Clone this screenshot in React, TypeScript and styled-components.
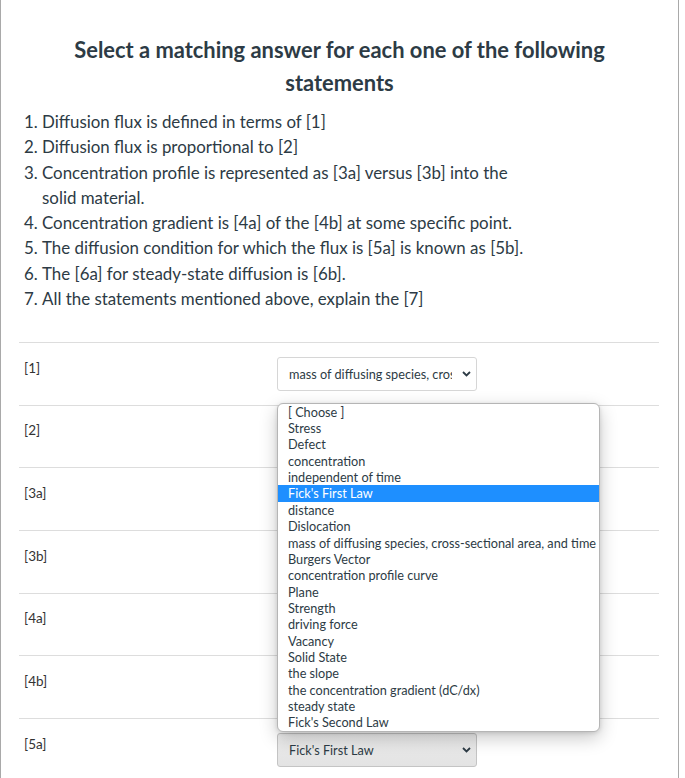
import React from "react";
import styled, { createGlobalStyle } from "styled-components";

const GlobalStyle = createGlobalStyle`
  html, body { margin: 0; padding: 0; background: #ffffff; }
  body { font-family: Lato, "Open Sans", "Liberation Sans", sans-serif; color: #2d3b45; }
`;

const Frame = styled.div`
  width: 677px;
  border-left: 1px solid #a9a9a9;
  border-right: 1px solid #a9a9a9;
  padding-top: 33px;
  padding-bottom: 40px;
`;

const Title = styled.h2`
  margin: 0 auto;
  max-width: 560px;
  text-align: center;
  font-size: 21.9px;
  line-height: 33px;
  font-weight: 700;
  color: #2d3b45;
`;

const Statements = styled.ol`
  margin: 10px 0 0;
  padding: 0 143px 0 41px;
  font-size: 16.9px;
  line-height: 25.3px;
  color: #2d3b45;
`;

const Rows = styled.div`
  margin: 30.5px 19px 0 18px;
  display: flex;
  flex-direction: column;
`;

const Row = styled.div`
  display: grid;
  grid-template-columns: 258px 1fr;
  border-top: 1px solid #dddddd;
  padding: 13.85px 0 13.85px;
`;

const Label = styled.div`
  padding: 2px 0 0 5px;
  font-size: 13.5px;
  line-height: 18px;
  color: #333333;
`;

const Cell = styled.div`
  position: relative;
  height: 34px;
`;

const SelectBox = styled.div<{ $active?: boolean }>`
  box-sizing: border-box;
  width: 200px;
  height: 34px;
  display: flex;
  align-items: center;
  padding: 0 5px 0 11px;
  border: 1px solid ${(p) => (p.$active ? "#c4c4c4" : "#d6d6d6")};
  border-radius: 3px;
  background: ${(p) => (p.$active ? "linear-gradient(#ececec, #e3e3e3)" : "#ffffff")};
  font-size: 12.7px;
  color: #2d3b45;
`;

const SelectText = styled.span`
  flex: 1;
  overflow: hidden;
  white-space: nowrap;
  margin-right: 10px;
`;

const Chevron = styled.svg`
  width: 9px;
  height: 6px;
  flex: none;
`;

const Popup = styled.ul`
  position: absolute;
  left: 0;
  bottom: calc(100% + 1px);
  z-index: 5;
  box-sizing: border-box;
  width: 323px;
  margin: 0;
  padding: 0;
  list-style: none;
  background: #ffffff;
  border: 1px solid #b5b5b5;
  border-radius: 6px;
  overflow: hidden;
  box-shadow: 0 6px 18px rgba(0, 0, 0, 0.22), 0 1px 4px rgba(0, 0, 0, 0.12);
`;

const Option = styled.li<{ $selected?: boolean }>`
  height: 16.37px;
  line-height: 16.37px;
  padding-left: 10px;
  font-size: 12.7px;
  white-space: nowrap;
  color: ${(p) => (p.$selected ? "#ffffff" : "#2d3b45")};
  background: ${(p) => (p.$selected ? "#1e8fff" : "transparent")};
`;

const statements = [
  "Diffusion flux is defined in terms of [1]",
  "Diffusion flux is proportional to [2]",
  "Concentration profile is represented as [3a] versus [3b] into the solid material.",
  "Concentration gradient is [4a] of the [4b] at some specific point.",
  "The diffusion condition for which the flux is [5a] is known as [5b].",
  "The [6a] for steady-state diffusion is [6b].",
  "All the statements mentioned above, explain the [7]",
];

const options = [
  "[ Choose ]",
  "Stress",
  "Defect",
  "concentration",
  "independent of time",
  "Fick's First Law",
  "distance",
  "Dislocation",
  "mass of diffusing species, cross-sectional area, and time",
  "Burgers Vector",
  "concentration profile curve",
  "Plane",
  "Strength",
  "driving force",
  "Vacancy",
  "Solid State",
  "the slope",
  "the concentration gradient (dC/dx)",
  "steady state",
  "Fick's Second Law",
];

const rows: { label: string; value: string; open?: boolean }[] = [
  { label: "[1]", value: "mass of diffusing species, cross-sectional area, and time" },
  { label: "[2]", value: "[ Choose ]" },
  { label: "[3a]", value: "[ Choose ]" },
  { label: "[3b]", value: "[ Choose ]" },
  { label: "[4a]", value: "[ Choose ]" },
  { label: "[4b]", value: "[ Choose ]" },
  { label: "[5a]", value: "Fick's First Law", open: true },
  { label: "[5b]", value: "[ Choose ]" },
  { label: "[6a]", value: "[ Choose ]" },
  { label: "[6b]", value: "[ Choose ]" },
  { label: "[7]", value: "[ Choose ]" },
];

function ChevronIcon() {
  return (
    <Chevron viewBox="0 0 9 6">
      <polyline points="1,1 4.5,4.5 8,1" fill="none" stroke="#2d3b45" strokeWidth="1.8" />
    </Chevron>
  );
}

export default function App() {
  return (
    <>
      <GlobalStyle />
      <Frame>
        <Title>Select a matching answer for each one of the following statements</Title>
        <Statements>
          {statements.map((s) => (
            <li key={s}>{s}</li>
          ))}
        </Statements>
        <Rows>
          {rows.map((r) => (
            <Row key={r.label}>
              <Label>{r.label}</Label>
              <Cell>
                {r.open && (
                  <Popup>
                    {options.map((o) => (
                      <Option key={o} $selected={o === r.value}>
                        {o}
                      </Option>
                    ))}
                  </Popup>
                )}
                <SelectBox $active={r.open}>
                  <SelectText>{r.value}</SelectText>
                  <ChevronIcon />
                </SelectBox>
              </Cell>
            </Row>
          ))}
        </Rows>
      </Frame>
    </>
  );
}
